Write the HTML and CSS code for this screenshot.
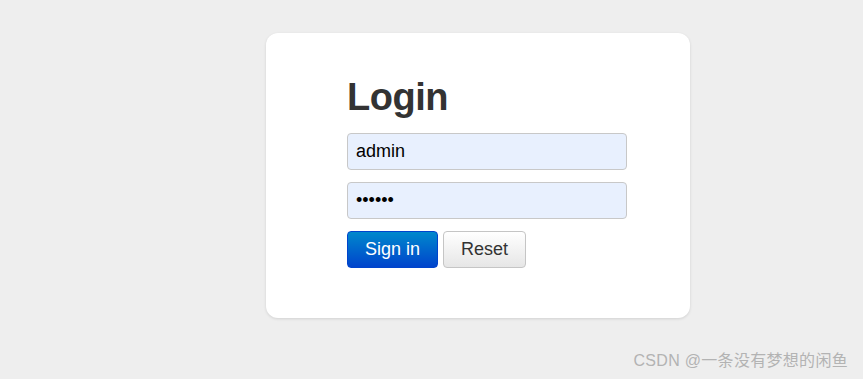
FILE: index.html
```html
<!DOCTYPE html>
<html>
<head>
<meta charset="utf-8">
<link rel="stylesheet" href="styles.css">
</head>
<body>
<div class="card">
  <form class="login-form">
    <h2 class="heading">Login</h2>
    <input class="field" type="text" value="admin">
    <input class="field" type="password" value="123456">
    <div class="actions">
      <button type="button" class="btn btn-primary">Sign in</button>
      <button type="button" class="btn btn-default">Reset</button>
    </div>
  </form>
</div>
<div class="watermark">CSDN @一条没有梦想的闲鱼</div>
</body>
</html>
```
FILE: styles.css
```css
html, body {
  margin: 0;
  padding: 0;
  height: 100%;
  background: #eeeeee;
  font-family: "Liberation Sans", Arial, sans-serif;
}
body {
  position: relative;
  padding-top: 33px;
  box-sizing: border-box;
}
.card {
  margin-left: 266px;
  width: 424px;
  height: 285px;
  box-sizing: border-box;
  background: #fff;
  border-radius: 12px;
  box-shadow: 0 1px 3px rgba(0,0,0,0.12);
  padding: 40px 0 0 81px;
}
.login-form {
  display: flex;
  flex-direction: column;
  width: 280px;
}
.heading {
  margin: 0 0 12px 0;
  font-size: 38px;
  line-height: 48px;
  font-weight: bold;
  color: #333;
  letter-spacing: -0.5px;
}
.field {
  width: 280px;
  height: 37px;
  box-sizing: border-box;
  margin: 0 0 12px 0;
  padding: 0 8px;
  border: 1px solid #c8c8c8;
  border-radius: 4px;
  background: #e8f0fe;
  font-family: "Liberation Sans", Arial, sans-serif;
  font-size: 18px;
  color: #000;
  outline: none;
}
.actions {
  display: flex;
  gap: 5px;
}
.btn {
  height: 37px;
  box-sizing: border-box;
  border-radius: 4px;
  font-family: "Liberation Sans", Arial, sans-serif;
  font-size: 18px;
  padding: 0;
  white-space: nowrap;
}
.btn-primary {
  width: 91px;
  color: #fff;
  border: 1px solid #0044cc;
  background: linear-gradient(to bottom, #0088cc, #0044cc);
}
.btn-default {
  width: 83px;
  color: #333;
  border: 1px solid #c5c5c5;
  background: linear-gradient(to bottom, #ffffff, #e6e6e6);
}
.watermark {
  position: absolute;
  right: 15px;
  bottom: 8px;
  font-family: "Liberation Sans", "Noto Sans CJK SC", sans-serif;
  font-size: 16px;
  letter-spacing: 0.3px;
  color: #b3b3b3;
}
```
